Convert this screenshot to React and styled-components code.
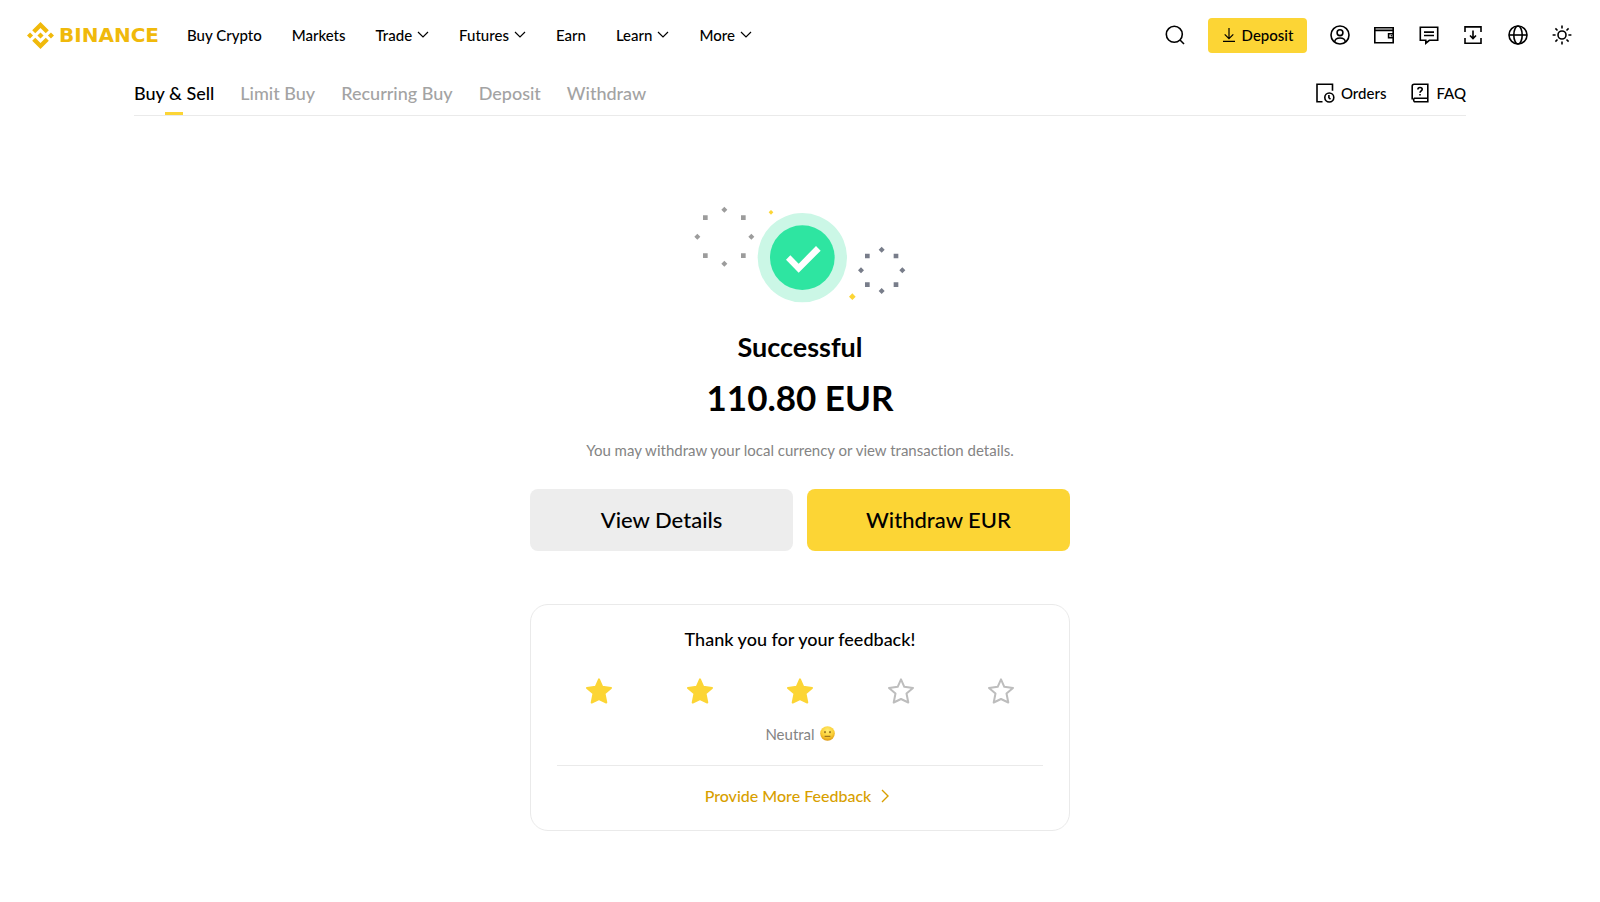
import React, { useState } from "react";
import styled, { createGlobalStyle } from "styled-components";

const GlobalStyle = createGlobalStyle`
  *, *::before, *::after { box-sizing: border-box; }
  body {
    margin: 0;
    background: #fff;
    color: #000;
    font-family: Lato, "Open Sans", sans-serif;
    font-variant-ligatures: none;
  }
  button, input { font-family: inherit; color: inherit; }
  svg { display: block; flex: none; }
`;

const Header = styled.header`
  display: flex;
  align-items: center;
  height: 70px;
  padding: 0 28px 0 27px;
`;

const Logo = styled.a`
  display: flex;
  align-items: center;
  gap: 5px;
  width: 132px;
  margin-right: 28px;
  color: #f0b90b;
  font-family: "DejaVu Sans", sans-serif;
  font-size: 20px;
  line-height: 28px;
  font-weight: 700;
  text-decoration: none;
`;

const MainNav = styled.nav`
  display: flex;
  align-items: center;
  gap: 30px;
`;

const NavLink = styled.a`
  color: inherit;
  font-size: 15px;
  line-height: 24px;
  font-weight: 500;
  text-decoration: none;
  white-space: nowrap;
`;

const NavMenu = styled.button`
  display: flex;
  align-items: center;
  gap: 5px;
  padding: 0;
  border: 0;
  background: none;
  font-size: 15px;
  line-height: 24px;
  font-weight: 500;
  cursor: pointer;
`;

const Actions = styled.div`
  display: flex;
  align-items: center;
  gap: 23px;
  margin-left: auto;
`;

const IconGroup = styled.div`
  display: flex;
  justify-content: space-between;
  width: 242px;
`;

const IconButton = styled.button`
  display: flex;
  padding: 0;
  border: 0;
  background: none;
  cursor: pointer;
`;

const DepositButton = styled.button`
  display: flex;
  align-items: center;
  justify-content: center;
  gap: 6px;
  width: 99px;
  height: 35px;
  padding: 0;
  border: 0;
  border-radius: 4px;
  background: #fcd535;
  font-size: 15px;
  line-height: 24px;
  font-weight: 500;
  cursor: pointer;
`;

const SubNav = styled.nav`
  display: flex;
  align-items: stretch;
  justify-content: space-between;
  width: calc(100% - 54px);
  max-width: 1332px;
  height: 46px;
  margin: 0 auto;
  border-bottom: 1px solid #eaeaea;
`;

const Tabs = styled.div`
  display: flex;
  gap: 26px;
`;

const Tab = styled.a`
  position: relative;
  display: flex;
  align-items: center;
  color: ${(p) => (p.$active ? "#000" : "#a3a3a3")};
  font-size: 18px;
  line-height: 24px;
  font-weight: 500;
  text-decoration: none;
  white-space: nowrap;

  &::after {
    content: "";
    display: ${(p) => (p.$active ? "block" : "none")};
    position: absolute;
    bottom: 0;
    left: calc(50% - 9px);
    width: 18px;
    height: 3px;
    background: #fcd535;
  }
`;

const HelpLinks = styled.div`
  display: flex;
  gap: 24px;
`;

const HelpLink = styled.a`
  display: flex;
  align-items: center;
  gap: 6px;
  color: inherit;
  font-size: 15px;
  line-height: 24px;
  font-weight: 500;
  text-decoration: none;
`;

const Main = styled.main`
  display: flex;
  flex-direction: column;
  align-items: center;
  padding: 74px 16px 71px;
`;

const Status = styled.h1`
  margin: 9px 0 0;
  font-size: 27px;
  line-height: 36px;
  font-weight: 700;
`;

const Amount = styled.p`
  margin: 10px 0 0;
  font-size: 35px;
  line-height: 44px;
  font-weight: 700;
`;

const Hint = styled.p`
  margin: 19px 0 0;
  color: #848484;
  font-size: 15px;
  line-height: 24px;
`;

const ButtonRow = styled.div`
  display: grid;
  grid-template-columns: 1fr 1fr;
  gap: 14px;
  width: 100%;
  max-width: 540px;
  margin-top: 27px;
`;

const BigButton = styled.button`
  height: 62px;
  padding: 0;
  border: 0;
  border-radius: 8px;
  background: ${(p) => (p.$primary ? "#fcd535" : "#ededed")};
  font-size: 22px;
  line-height: 28px;
  font-weight: 500;
  cursor: pointer;
`;

const Card = styled.section`
  display: flex;
  flex-direction: column;
  align-items: center;
  width: 100%;
  max-width: 540px;
  margin-top: 53px;
  padding: 22px 26px;
  border: 1px solid #eaeaea;
  border-radius: 18px;
`;

const CardTitle = styled.h2`
  margin: 0;
  font-size: 18px;
  line-height: 24px;
  font-weight: 500;
`;

const Stars = styled.fieldset`
  display: flex;
  justify-content: space-between;
  width: 100%;
  margin: 26px 0 0;
  padding: 0 28px;
  border: 0;
`;

const StarLabel = styled.label`
  position: relative;
  cursor: pointer;
`;

const StarInput = styled.input`
  position: absolute;
  inset: 0;
  width: 100%;
  height: 100%;
  margin: 0;
  opacity: 0;
  cursor: pointer;
`;

const Mood = styled.p`
  display: flex;
  align-items: center;
  gap: 5px;
  margin: 17px 0 0;
  color: #848484;
  font-size: 15px;
  line-height: 24px;
`;

const Divider = styled.hr`
  width: 100%;
  height: 1px;
  margin: 19px 0 18px;
  border: 0;
  background: #eaeaea;
`;

const FeedbackLink = styled.a`
  display: flex;
  align-items: center;
  gap: 10px;
  padding-right: 6px;
  color: #d89f00;
  font-size: 16px;
  line-height: 24px;
  font-weight: 500;
  text-decoration: none;
`;

const Icon = ({ children }) => (
  <svg width="20" height="20" viewBox="0 0 20 20" fill="none" stroke="currentColor" strokeWidth="1.6" aria-hidden="true">
    {children}
  </svg>
);

const LogoMark = () => (
  <svg width="27" height="27" viewBox="0 0 126.61 126.61" fill="currentColor" aria-hidden="true">
    <path d="M38.73 53.2 63.31 28.62 87.9 53.21 102.2 38.91 63.31 0 24.43 38.9zM0 63.31 14.3 49.01 28.6 63.31 14.3 77.61zM38.73 73.41 63.31 98 87.9 73.4 102.21 87.69 63.31 126.61 24.42 87.72zM98 63.31 112.3 49.01 126.6 63.3 112.3 77.61zM77.82 63.3 63.31 48.78 52.58 59.5 48.8 63.28 63.31 77.8z" />
  </svg>
);

const Chevron = () => (
  <svg width="12" height="8" viewBox="0 0 12 8" fill="none" stroke="currentColor" strokeWidth="1.2" aria-hidden="true">
    <path d="M1 1 6 6 11 1" />
  </svg>
);

const SearchIcon = () => (
  <Icon>
    <circle cx="9.3" cy="9.3" r="8" />
    <path d="m15 15 4 4" />
  </Icon>
);

const DepositIcon = () => (
  <svg width="14" height="16" viewBox="0 0 14 16" fill="none" stroke="currentColor" strokeWidth="1.2" aria-hidden="true">
    <path d="M7 1v10.500M2.700 7.300 7 11.600l4.300-4.300M1 14.400h12" />
  </svg>
);

const headerIcons = [
  {
    name: "Account",
    art: (
      <>
        <circle cx="10" cy="10" r="9" />
        <circle cx="10" cy="7.700" r="2.900" />
        <path d="M4.600 17c.3-2.600 2-4 5.400-4s5.100 1.400 5.400 4" />
      </>
    ),
  },
  {
    name: "Wallet",
    art: (
      <>
        <path d="M.8 2.700h18.400v15H.8zM.8 5.400h18.400" />
        <path d="M19.200 8.800h-4.600v4h4.600M16.700 10.800h1.200" />
      </>
    ),
  },
  {
    name: "Messages",
    art: <path d="M1.300 2.300h17.400v13h-8.400l-3.500 2.900v-2.900H1.300zM5 7.100h10M5 10.500h10" />,
  },
  {
    name: "Downloads",
    art: (
      <>
        <path d="M2 7V1.900h16V7M2 13v5.300h16V13" />
        <path d="M10 5.600v7.600M7 10.500l3 3 3-3" />
      </>
    ),
  },
  {
    name: "Language",
    art: (
      <>
        <circle cx="10" cy="10" r="9" />
        <ellipse cx="10" cy="10" rx="4.200" ry="9" />
        <path d="M1 10h18" />
      </>
    ),
  },
  {
    name: "Theme",
    art: (
      <>
        <circle cx="10" cy="10" r="4" />
        <path d="M10 .6v3M10 16.400v3M.6 10h3M16.400 10h3M3.400 3.400l2.100 2.100M14.500 14.500l2.100 2.100M3.400 16.600l2.100-2.100M14.500 5.500l2.100-2.100" />
      </>
    ),
  },
];

const OrdersIcon = () => (
  <Icon>
    <path d="M7.500 18.800H2V1.200h15.500v6.600" />
    <circle cx="14.300" cy="14.500" r="4.500" />
    <path d="M13.900 12v2.700l1.600 1.600" />
  </Icon>
);

const FaqIcon = () => (
  <Icon>
    <path d="M2.200 16.500V3.200q0-2 2-2h13.600v17.600H4.500a2.300 2.300 0 0 1 0-3.600h13.300" />
    <path d="M7.900 6.400c0-1.200.9-1.900 2.100-1.900s2.200.7 2.200 1.900c0 1.400-2.200 1.600-2.200 3.300M10 11v1.500" />
  </Icon>
);

const diamond = (x, y, r) => `M${x} ${y - r}l${r} ${r}l${-r} ${r}l${-r} ${-r}z`;
const square = (x, y, r) => `M${x - r} ${y - r}h${2 * r}v${2 * r}h${-2 * r}z`;
const dotRing = (x, y, outer, inner) =>
  [
    diamond(x, y - outer, 9),
    diamond(x, y + outer, 9),
    diamond(x - outer, y, 9),
    diamond(x + outer, y, 9),
    square(x - inner, y - inner, 7),
    square(x + inner, y - inner, 7),
    square(x - inner, y + inner, 7),
    square(x + inner, y + inner, 7),
  ].join("");

const SuccessArt = () => (
  <svg width="240" height="130" viewBox="0 0 720 390" role="img" aria-label="Success">
    <path fill="#9c9c9c" d={dotRing(133, 140, 81, 57)} />
    <path fill="#787d8a" d={dotRing(605, 241, 62, 43)} />
    <path fill="#fcd535" d={diamond(273, 67, 7) + diamond(517, 320, 10)} />
    <circle cx="367" cy="203" r="134" fill="#cbf7e6" />
    <circle cx="367" cy="203" r="97" fill="#2ee5a1" />
    <path fill="#fff" d="M318 209 331 196 356 221 408 168 422 182 356 248z" />
  </svg>
);

const StarShape = ({ filled }) => (
  <svg
    width="28"
    height="28"
    viewBox="0 0 28 28"
    fill={filled ? "#fcd535" : "none"}
    stroke={filled ? "#fcd535" : "#bdbdbd"}
    strokeWidth="2"
    strokeLinejoin="round"
    aria-hidden="true"
  >
    <path d="M14 2.300 17.300 9.800 26 10.900 19.500 16.500 21.300 25.500 14 22 6.700 25.500 8.500 16.500 2 10.900 10.700 9.800z" />
  </svg>
);

const NeutralFace = () => (
  <svg width="15" height="16" viewBox="0 0 15 16" role="img" aria-label="neutral face">
    <defs>
      <radialGradient id="face" cx="50%" cy="30%" r="70%">
        <stop offset="0" stopColor="#ffed72" />
        <stop offset="0.6" stopColor="#fbcf35" />
        <stop offset="1" stopColor="#dd9814" />
      </radialGradient>
    </defs>
    <circle cx="7.500" cy="7.500" r="7.300" fill="url(#face)" />
    <ellipse cx="5" cy="6.200" rx="0.800" ry="1.100" fill="#8a6114" />
    <ellipse cx="10" cy="6.200" rx="0.800" ry="1.100" fill="#8a6114" />
    <path d="M4.600 10.300h5.800" stroke="#8a6114" strokeWidth="1" />
  </svg>
);

const navItems = [
  { label: "Buy Crypto" },
  { label: "Markets" },
  { label: "Trade", menu: true },
  { label: "Futures", menu: true },
  { label: "Earn" },
  { label: "Learn", menu: true },
  { label: "More", menu: true },
];

const tabs = ["Buy & Sell", "Limit Buy", "Recurring Buy", "Deposit", "Withdraw"];

export default function App() {
  const [rating, setRating] = useState(3);

  return (
    <>
      <GlobalStyle />
      <Header>
        <Logo href="#">
          <LogoMark />
          BINANCE
        </Logo>
        <MainNav aria-label="Main">
          {navItems.map(({ label, menu }) =>
            menu ? (
              <NavMenu key={label} type="button">
                {label}
                <Chevron />
              </NavMenu>
            ) : (
              <NavLink key={label} href="#">
                {label}
              </NavLink>
            )
          )}
        </MainNav>
        <Actions>
          <IconButton type="button" aria-label="Search">
            <SearchIcon />
          </IconButton>
          <DepositButton type="button">
            <DepositIcon />
            Deposit
          </DepositButton>
          <IconGroup>
            {headerIcons.map(({ name, art }) => (
              <IconButton key={name} type="button" aria-label={name}>
                <Icon>{art}</Icon>
              </IconButton>
            ))}
          </IconGroup>
        </Actions>
      </Header>

      <SubNav aria-label="Buy and sell">
        <Tabs>
          {tabs.map((label, i) => (
            <Tab key={label} href="#" $active={i === 0}>
              {label}
            </Tab>
          ))}
        </Tabs>
        <HelpLinks>
          <HelpLink href="#">
            <OrdersIcon />
            Orders
          </HelpLink>
          <HelpLink href="#">
            <FaqIcon />
            FAQ
          </HelpLink>
        </HelpLinks>
      </SubNav>

      <Main>
        <SuccessArt />
        <Status>Successful</Status>
        <Amount>110.80 EUR</Amount>
        <Hint>You may withdraw your local currency or view transaction details.</Hint>
        <ButtonRow>
          <BigButton type="button">View Details</BigButton>
          <BigButton type="button" $primary>
            Withdraw EUR
          </BigButton>
        </ButtonRow>
        <Card>
          <CardTitle>Thank you for your feedback!</CardTitle>
          <Stars aria-label="Rating">
            {[1, 2, 3, 4, 5].map((n) => (
              <StarLabel key={n}>
                <StarInput
                  type="radio"
                  name="rating"
                  value={n}
                  aria-label={`${n} out of 5`}
                  checked={rating === n}
                  onChange={() => setRating(n)}
                />
                <StarShape filled={n <= rating} />
              </StarLabel>
            ))}
          </Stars>
          <Mood>
            Neutral
            <NeutralFace />
          </Mood>
          <Divider />
          <FeedbackLink href="#">
            Provide More Feedback
            <svg width="8" height="14" viewBox="0 0 8 14" fill="none" stroke="currentColor" strokeWidth="1.400" aria-hidden="true">
              <path d="M1 1 7 7 1 13" />
            </svg>
          </FeedbackLink>
        </Card>
      </Main>
    </>
  );
}
